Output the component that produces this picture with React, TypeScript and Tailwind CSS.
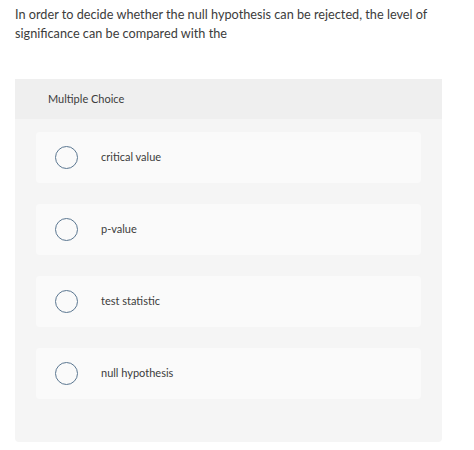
const options = ["critical value", "p-value", "test statistic", "null hypothesis"];

export default function App() {
    return (
        <div className="w-[474px] h-[450px] bg-white pt-[5px]" style={{ fontFamily: "Lato, 'Open Sans', sans-serif" }}>
            <p className="ml-[15px] mr-[20px] text-[12.7px] leading-[19px] text-[#3c3c3c]">
                In order to decide whether the null hypothesis can be rejected, the level of significance can be compared with the
            </p>
            <div className="ml-[15px] mt-[36px] w-[427px] h-[363px] bg-[#f5f5f5] rounded-sm">
                <div className="h-[40px] bg-[#efefef] flex items-center pl-[33px] text-[11px] text-[#3c3c3c]">
                    Multiple Choice
                </div>
                <div className="flex flex-col gap-[21px] pt-[13px] px-[21px]">
                    {options.map((o) => (
                        <div key={o} className="h-[51px] bg-[#fafafa] rounded-sm flex items-center pl-[19px]">
                            <span className="w-[23px] h-[23px] rounded-full border-[1.5px] border-[#5b7791] shrink-0" />
                            <span className="ml-[23px] text-[11px] text-[#3c3c3c]">{o}</span>
                        </div>
                    ))}
                </div>
            </div>
        </div>
    );
}
